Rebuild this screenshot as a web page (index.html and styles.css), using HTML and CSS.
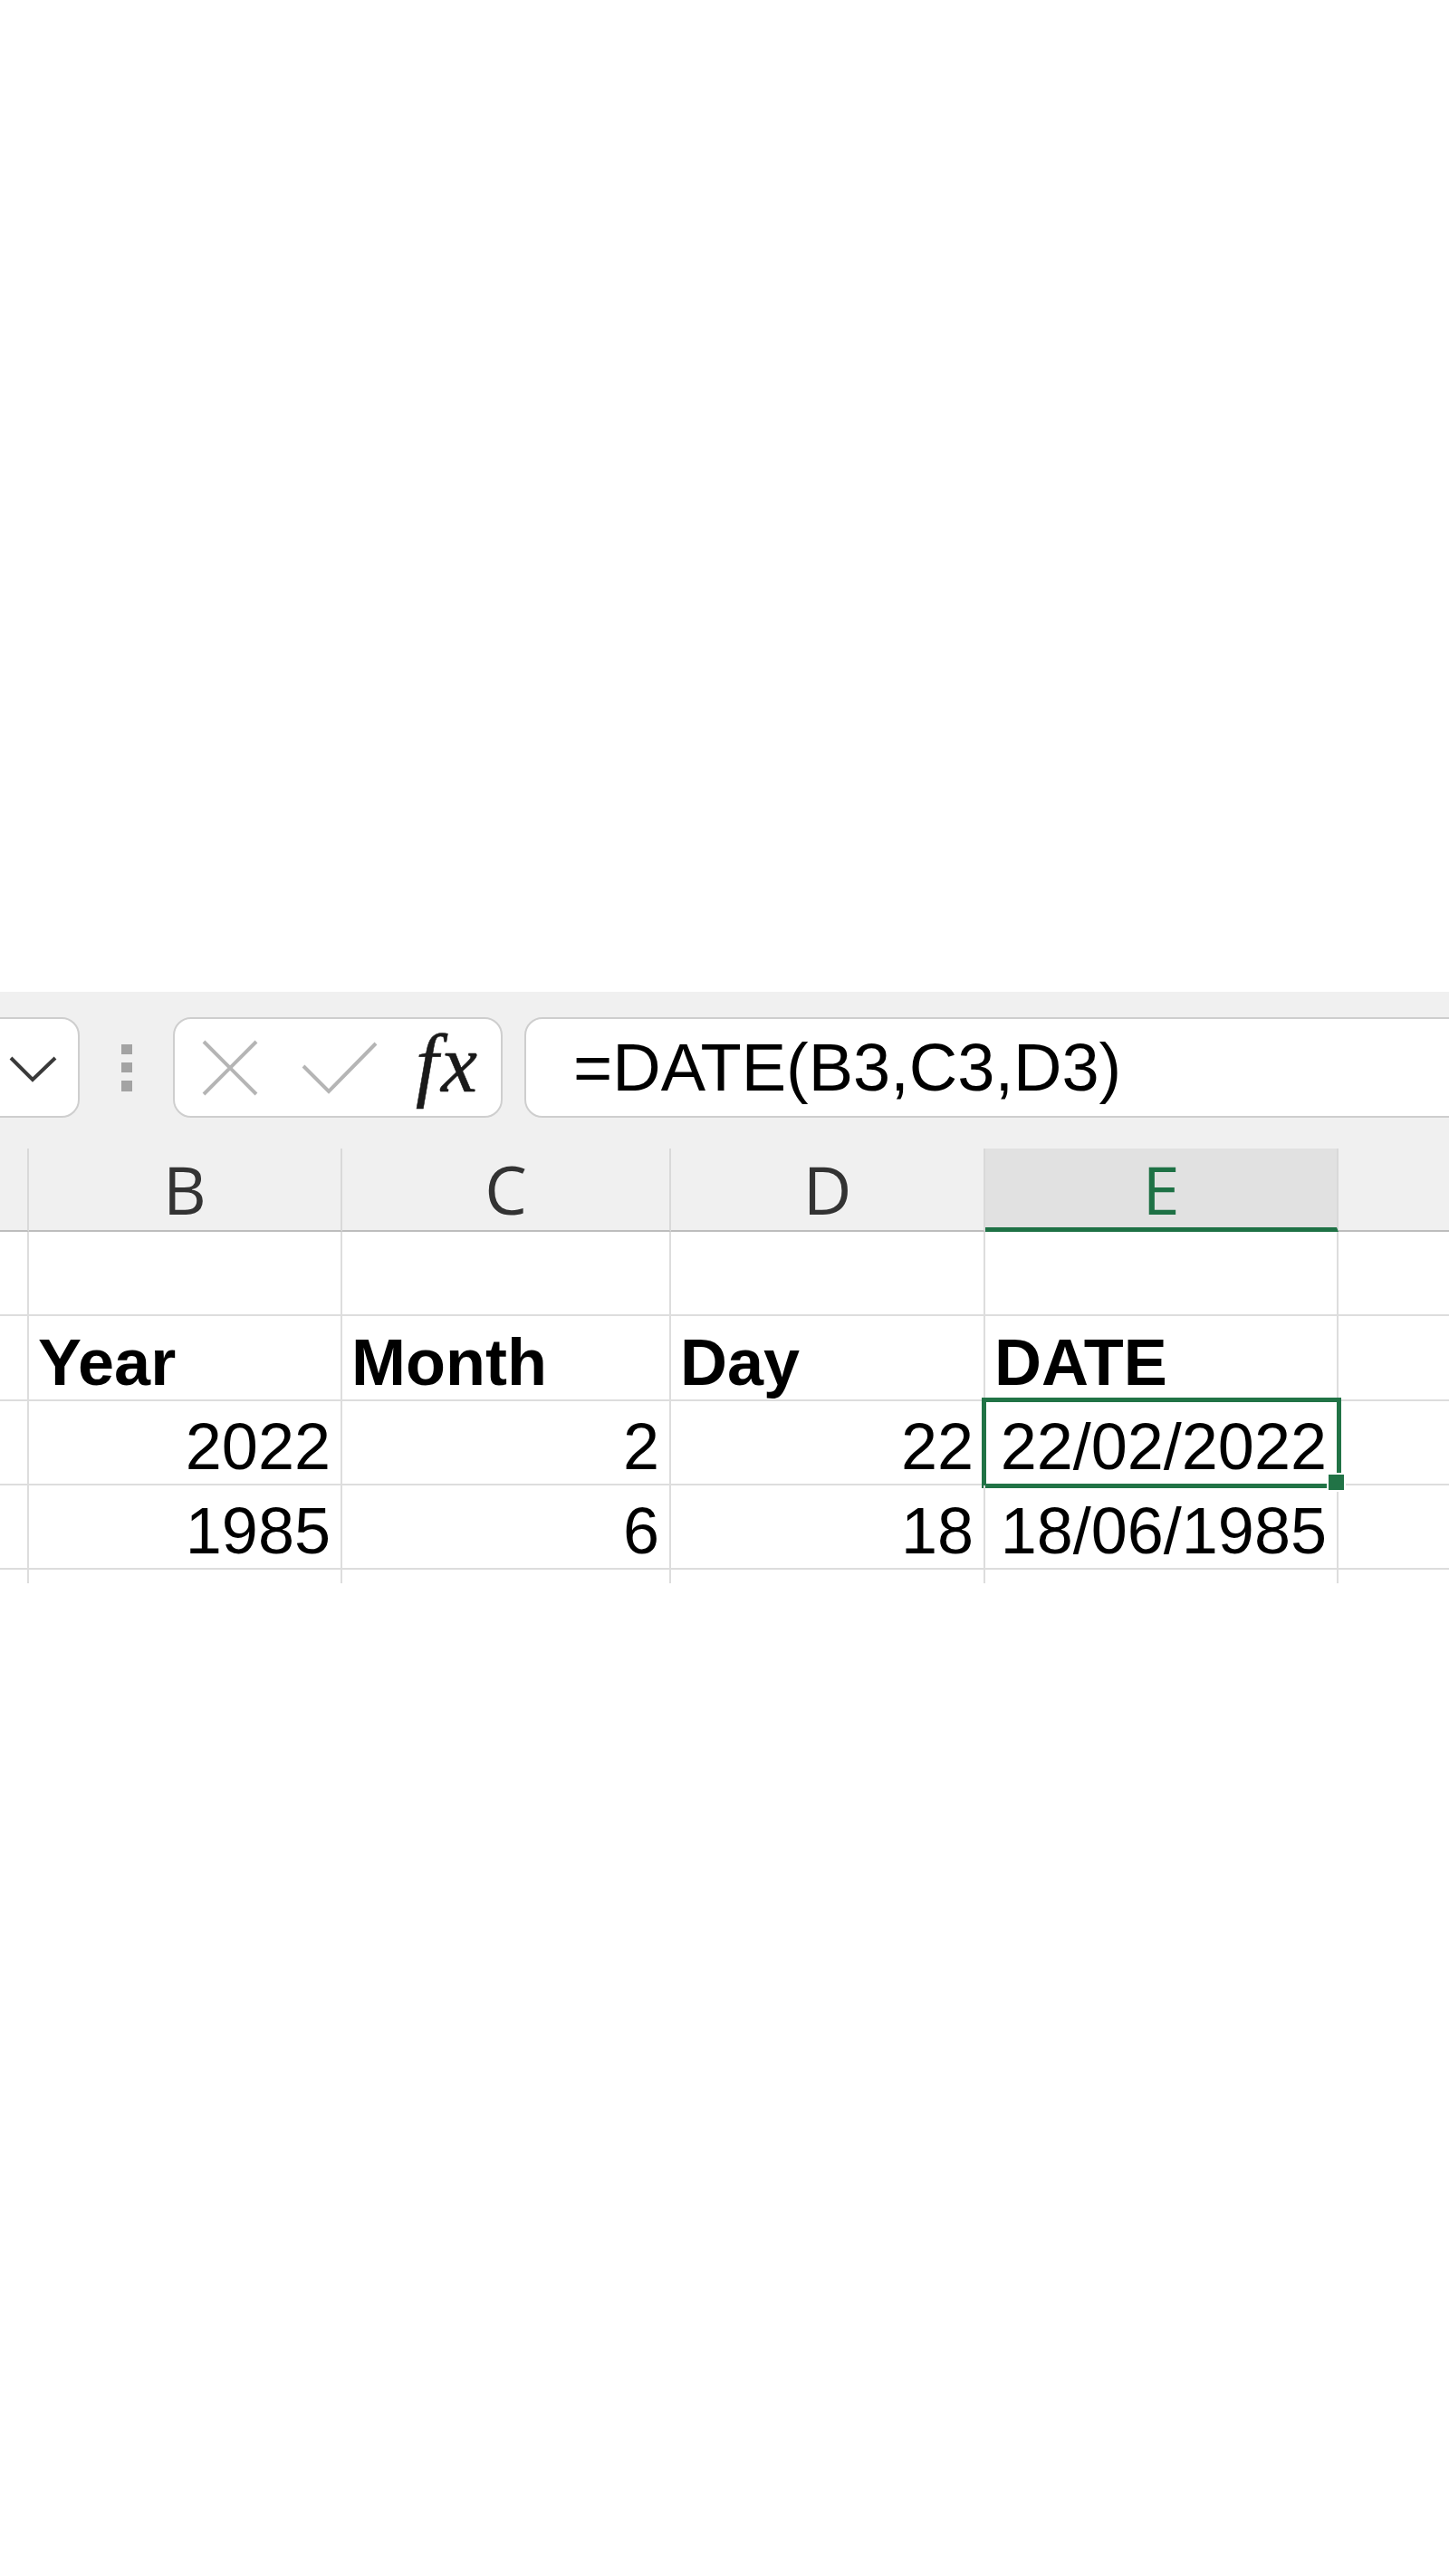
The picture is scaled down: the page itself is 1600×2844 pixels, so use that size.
FILE: index.html
```html
<!DOCTYPE html>
<html lang="en">
<head>
<meta charset="utf-8">
<title>DATE function</title>
<link rel="stylesheet" href="styles.css">
</head>
<body>
<div class="page">
  <div class="top-space"></div>
  <div class="sheet">
    <div class="fbar">
      <div class="namebox">
        <svg class="chev" width="54" height="30" viewBox="0 0 54 30"><polyline points="2,3 26,27 51,3" fill="none" stroke="#3a3a3a" stroke-width="4"/></svg>
      </div>
      <svg class="grip" width="14" height="52" viewBox="0 0 14 52"><rect x="1" y="0" width="12" height="11" fill="#a3a3a3"/><rect x="1" y="20" width="12" height="11" fill="#a3a3a3"/><rect x="1" y="40" width="12" height="12" fill="#a3a3a3"/></svg>
      <div class="btns">
        <svg class="xic" width="62" height="62" viewBox="0 0 62 62"><path d="M2 2 L60 60 M60 2 L2 60" stroke="#b5b5b5" stroke-width="4" fill="none"/></svg>
        <svg class="chk" width="84" height="60" viewBox="0 0 84 60"><polyline points="2,28 30,56 82,3" fill="none" stroke="#b5b5b5" stroke-width="4"/></svg>
        <span class="fx">fx</span>
      </div>
      <div class="formula">=DATE(B3,C3,D3)</div>
    </div>
    <div class="grid">
      <div class="h"></div>
      <div class="h">B</div>
      <div class="h">C</div>
      <div class="h">D</div>
      <div class="h sel">E</div>
      <div class="h last"></div>

      <div class="c"></div><div class="c"></div><div class="c"></div><div class="c"></div><div class="c"></div><div class="c last"></div>

      <div class="c"></div>
      <div class="c b">Year</div>
      <div class="c b">Month</div>
      <div class="c b">Day</div>
      <div class="c b">DATE</div>
      <div class="c last"></div>

      <div class="c"></div>
      <div class="c num">2022</div>
      <div class="c num">2</div>
      <div class="c num">22</div>
      <div class="c num active">22/02/2022<span class="handle"></span></div>
      <div class="c last"></div>

      <div class="c"></div>
      <div class="c num">1985</div>
      <div class="c num">6</div>
      <div class="c num">18</div>
      <div class="c num">18/06/1985</div>
      <div class="c last"></div>

      <div class="c cut"></div><div class="c cut"></div><div class="c cut"></div><div class="c cut"></div><div class="c cut"></div><div class="c cut last"></div>
    </div>
  </div>
</div>
</body>
</html>
```

FILE: styles.css
```css
html, body {
  margin: 0;
  padding: 0;
  background: #ffffff;
}

.page {
  width: 1600px;
  height: 2844px;
  overflow: hidden;
  background: #ffffff;
}

.top-space {
  height: 1095px;
}

.sheet {
  width: 1600px;
  overflow: hidden;
}

.fbar {
  display: flex;
  align-items: center;
  box-sizing: border-box;
  height: 173px;
  padding: 28px 0 34px 0;
  background: #f0f0f0;
}

.namebox {
  flex: 0 0 auto;
  box-sizing: border-box;
  width: 200px;
  height: 111px;
  margin-left: -112px;
  border: 2px solid #cecece;
  border-radius: 20px;
  background: #ffffff;
  display: flex;
  align-items: center;
  justify-content: flex-end;
  padding-right: 22px;
}

.chev {
  display: block;
  margin-top: 3px;
}

.grip {
  flex: 0 0 auto;
  display: block;
  margin-left: 45px;
}

.btns {
  flex: 0 0 auto;
  box-sizing: border-box;
  width: 364px;
  height: 111px;
  margin-left: 44px;
  border: 2px solid #cecece;
  border-radius: 20px;
  background: #ffffff;
  display: flex;
  align-items: center;
}

.xic {
  display: block;
  margin-left: 30px;
}

.chk {
  display: block;
  margin-left: 48px;
}

.fx {
  font-family: "Liberation Serif", "Times New Roman", serif;
  font-style: italic;
  font-size: 90px;
  letter-spacing: 3px;
  line-height: 1;
  color: #1a1a1a;
  margin-left: 42px;
  margin-top: -8px;
  -webkit-text-stroke: 0.6px #1a1a1a;
}

.formula {
  flex: 0 0 auto;
  box-sizing: border-box;
  width: 1200px;
  height: 111px;
  margin-left: 24px;
  border: 2px solid #cecece;
  border-radius: 20px;
  background: #ffffff;
  display: flex;
  align-items: center;
  padding-left: 52px;
  font-family: "Liberation Sans", Arial, sans-serif;
  font-size: 74px;
  line-height: 1;
  color: #000000;
}

.grid {
  display: grid;
  grid-template-columns: 32px 346px 363px 347px 390px 122px;
  grid-template-rows: 92px 93px 94px 93px 93px 15px;
}

.h {
  box-sizing: border-box;
  background: #f0f0f0;
  border-right: 2px solid #d9d9d9;
  border-bottom: 2px solid #bdbdbd;
  display: flex;
  align-items: center;
  justify-content: center;
  font-family: "Open Sans", "Noto Sans", sans-serif;
  font-size: 74px;
  line-height: 1;
  color: #333333;
}

.h.sel {
  background: #e1e1e1;
  color: #1e7145;
  border-bottom: 5px solid #1e7145;
  padding-top: 3px;
}

.h.last {
  border-right: none;
}

.c {
  position: relative;
  box-sizing: border-box;
  border-right: 2px solid #dddddd;
  border-bottom: 2px solid #dddddd;
  display: flex;
  align-items: flex-end;
  padding: 0 11px 5px 10px;
  font-family: "Liberation Sans", Arial, sans-serif;
  font-size: 72px;
  line-height: 72px;
  color: #000000;
  white-space: nowrap;
}

.c.last {
  border-right: none;
}

.c.cut {
  border-bottom: none;
}

.c.b {
  font-weight: bold;
}

.c.num {
  justify-content: flex-end;
}

.c.active::after {
  content: "";
  position: absolute;
  top: -4px;
  left: -4px;
  right: -5px;
  bottom: -5px;
  border: 5px solid #217346;
  pointer-events: none;
}

.handle {
  position: absolute;
  right: -10px;
  bottom: -9px;
  width: 17px;
  height: 17px;
  background: #217346;
  border: 2px solid #ffffff;
  z-index: 2;
}
```
